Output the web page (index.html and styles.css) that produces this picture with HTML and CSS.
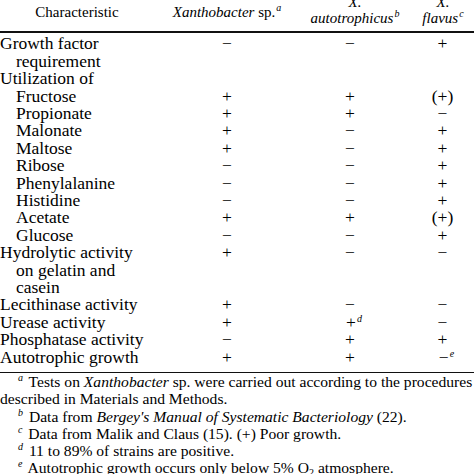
FILE: index.html
```html
<!DOCTYPE html>
<html>
<head>
<meta charset="utf-8">
<link rel="stylesheet" href="styles.css">
</head>
<body>
<div class="page">
  <div class="table">
    <div class="head">
      <div class="hcell one">Characteristic</div>
      <div class="hcell one"><i>Xanthobacter</i> sp.<sup>a</sup></div>
      <div class="hcell two"><i>X.<br>autotrophicus</i><sup>b</sup></div>
      <div class="hcell two"><i>X.<br>flavus</i><sup>c</sup></div>
    </div>
    <div class="tbody">
      <div class="row"><div class="label">Growth factor requirement</div><div class="val">−</div><div class="val">−</div><div class="val">+</div></div>
      <div class="row"><div class="label">Utilization of</div><div class="val"></div><div class="val"></div><div class="val"></div></div>
      <div class="row sub"><div class="label">Fructose</div><div class="val">+</div><div class="val">+</div><div class="val">(+)</div></div>
      <div class="row sub"><div class="label">Propionate</div><div class="val">+</div><div class="val">+</div><div class="val">−</div></div>
      <div class="row sub"><div class="label">Malonate</div><div class="val">+</div><div class="val">−</div><div class="val">+</div></div>
      <div class="row sub"><div class="label">Maltose</div><div class="val">+</div><div class="val">−</div><div class="val">+</div></div>
      <div class="row sub"><div class="label">Ribose</div><div class="val">−</div><div class="val">−</div><div class="val">+</div></div>
      <div class="row sub"><div class="label">Phenylalanine</div><div class="val">−</div><div class="val">−</div><div class="val">+</div></div>
      <div class="row sub"><div class="label">Histidine</div><div class="val">−</div><div class="val">−</div><div class="val">+</div></div>
      <div class="row sub"><div class="label">Acetate</div><div class="val">+</div><div class="val">+</div><div class="val">(+)</div></div>
      <div class="row sub"><div class="label">Glucose</div><div class="val">−</div><div class="val">−</div><div class="val">+</div></div>
      <div class="row"><div class="label">Hydrolytic activity on gelatin and casein</div><div class="val">+</div><div class="val">−</div><div class="val">−</div></div>
      <div class="row"><div class="label">Lecithinase activity</div><div class="val">+</div><div class="val">−</div><div class="val">−</div></div>
      <div class="row"><div class="label">Urease activity</div><div class="val">+</div><div class="val">+<sup class="note">d</sup></div><div class="val">−</div></div>
      <div class="row"><div class="label">Phosphatase activity</div><div class="val">−</div><div class="val">+</div><div class="val">+</div></div>
      <div class="row"><div class="label">Autotrophic growth</div><div class="val">+</div><div class="val">+</div><div class="val">−<sup class="note">e</sup></div></div>
    </div>
  </div>
  <div class="notes">
    <p><sup>a</sup> Tests on <i>Xanthobacter</i> sp. were carried out according to the procedures described in Materials and Methods.</p>
    <p><sup>b</sup> Data from <i>Bergey's Manual of Systematic Bacteriology</i> (22).</p>
    <p><sup>c</sup> Data from Malik and Claus (15). (+) Poor growth.</p>
    <p><sup>d</sup> 11 to 89% of strains are positive.</p>
    <p><sup>e</sup> Autotrophic growth occurs only below 5% O<sub>2</sub> atmosphere.</p>
  </div>
</div>
</body>
</html>
```

FILE: styles.css
```css
html, body {
  margin: 0;
  padding: 0;
  overflow: hidden;
  background: #fff;
}

.page {
  width: 490px;
  font-family: "Liberation Serif", "Times New Roman", serif;
  color: #000;
}

.table {
  width: 476px;
}

.head {
  display: grid;
  grid-template-columns: 154px 146px 110px 66px;
  margin-top: -6px;
  height: 37px;
  border-bottom: 2px solid #111;
  font-size: 15px;
  line-height: 16px;
}

.hcell {
  text-align: center;
  align-self: end;
}

.hcell.one {
  padding-bottom: 11px;
}

.hcell.two {
  padding-bottom: 5px;
}

.hcell sup,
.val sup,
.notes sup {
  font-style: italic;
  font-size: 10px;
  line-height: 0;
  vertical-align: 6px;
}

.hcell sup {
  margin-left: 1px;
}

.tbody {
  padding-top: 2.4px;
  padding-bottom: 6px;
  border-bottom: 1.5px solid #111;
  font-size: 17.5px;
  line-height: 17.4px;
}

.row {
  display: grid;
  grid-template-columns: 163px 128px 118px 67px;
}

.label {
  padding-left: 16px;
  text-indent: -16px;
  padding-right: 12px;
}

.row.sub .label {
  padding-left: 32px;
}

.val {
  text-align: center;
}

.val .note {
  margin-right: -8px;
  margin-left: 1px;
}

.notes {
  font-size: 15.6px;
  line-height: 17.2px;
}

.notes p {
  margin: 0;
  text-indent: 18px;
}

.notes sup {
  margin-right: 2px;
}

.notes sub {
  font-size: 10px;
  line-height: 0;
  vertical-align: -3px;
}
```
